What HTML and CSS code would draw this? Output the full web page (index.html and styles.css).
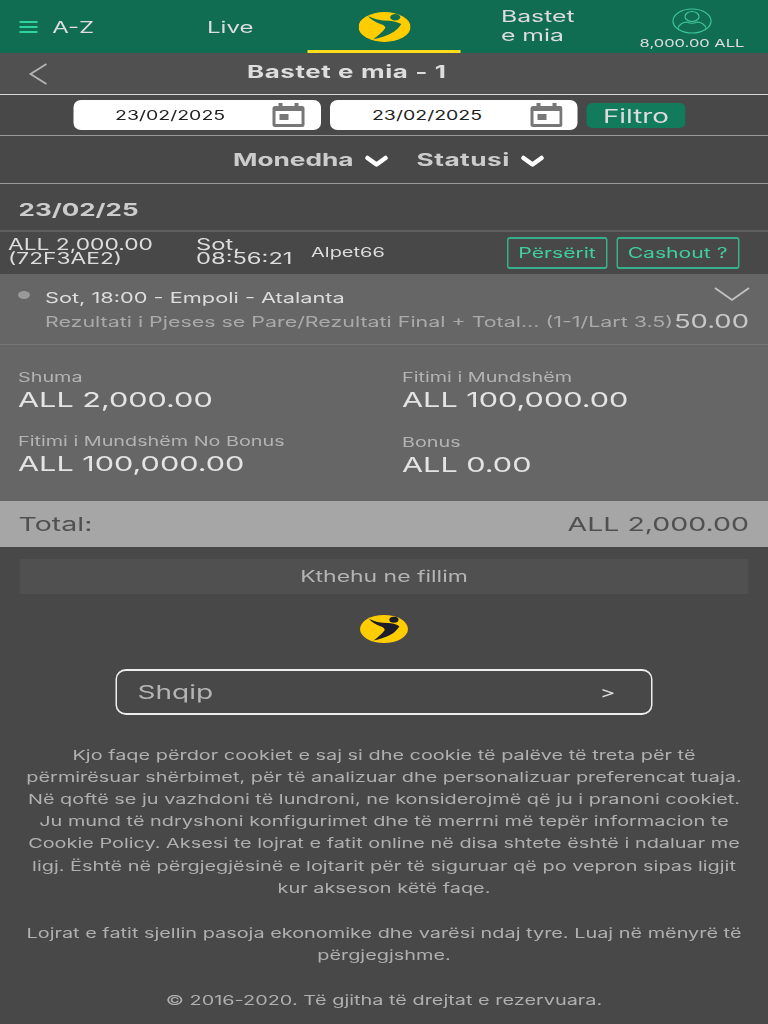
FILE: index.html
```html
<!DOCTYPE html>
<html lang="en">
<head>
    <meta charset="UTF-8">
    <meta name="viewport" content="width=device-width, initial-scale=1.0">
    <title>Bastet e mia</title>
    <link rel="stylesheet" href="styles.css">
</head>
<body>
<div class="page">
    <svg class="defs" width="0" height="0" aria-hidden="true">
        <symbol id="logo" viewBox="0 0 52 30" preserveAspectRatio="none">
            <ellipse cx="26" cy="15" rx="26" ry="15" fill="#fc0"></ellipse>
            <ellipse cx="36.700" cy="5.200" rx="5" ry="3.200" fill="currentColor"></ellipse>
            <path d="M9.700 4C15 7 22 8.700 30.300 8.700 34 8.700 39 10 42.700 12 41 15 38 18 35 20 28 24 21 26 14.700 27.300 19 24 24 20 26.500 16.500 27.500 14.500 25 13 22 12 17 10 12 7.500 9.700 4z" fill="currentColor"></path>
        </symbol>
        <symbol id="cal" viewBox="0 0 34 24" preserveAspectRatio="none">
            <path d="M1 5.500Q1 3 3.500 3H7V0h4v3h12V0h4v3h3.500Q33 3 33 5.500V21.500Q33 24 30.500 24H3.500Q1 24 1 21.500z" fill="#777"></path>
            <rect x="4" y="8" width="26" height="13" fill="#fff"></rect>
            <rect x="8" y="11" width="9" height="6" fill="#777"></rect>
        </symbol>
        <symbol id="chev" viewBox="0 0 24 13" preserveAspectRatio="none">
            <path d="M3 3l9 6.500L21 3" fill="none" stroke="#fff" stroke-width="4.500" stroke-linecap="round" stroke-linejoin="round"></path>
        </symbol>
    </svg>

    <header class="topbar">
        <div class="nav-az">
            <span class="burger"><i></i><i></i><i></i></span>
            <span>A-Z</span>
        </div>
        <div class="nav-live">Live</div>
        <div class="nav-home">
            <svg class="logo-top"><use href="#logo"></use></svg>
        </div>
        <div class="nav-bets">Bastet<br>e mia</div>
        <div class="nav-account">
            <svg class="user-icon" viewBox="0 0 40 26" preserveAspectRatio="none" fill="none" stroke="#3fc596" stroke-width="1.200">
                <ellipse cx="20" cy="13" rx="19" ry="12"></ellipse>
                <ellipse cx="20" cy="8.500" rx="7" ry="5"></ellipse>
                <path d="M6 21c0-4 5-7 9-7 3 1.500 7 1.500 10 0 4 0 9 3 9 7"></path>
            </svg>
            <span>8,000.00 ALL</span>
        </div>
    </header>

    <div class="titlebar">
        <svg class="back" viewBox="0 0 20 22" preserveAspectRatio="none" fill="none" stroke="#b5b5b5" stroke-width="1.800"><path d="M18 1L2 11l16 10"></path></svg>
        <h1>Bastet e mia - 1</h1>
    </div>

    <div class="dates">
        <div class="date-box"><span>23/02/2025</span><svg class="cal"><use href="#cal"></use></svg></div>
        <div class="date-box"><span>23/02/2025</span><svg class="cal"><use href="#cal"></use></svg></div>
        <button class="filter-btn">Filtro</button>
    </div>

    <div class="filters">
        <span>Monedha</span><svg class="chev"><use href="#chev"></use></svg>
        <span class="filter-second">Statusi</span><svg class="chev"><use href="#chev"></use></svg>
    </div>

    <div class="date-head">23/02/25</div>

    <div class="bet-row">
        <div class="bet-amount">ALL 2,000.00<br>(72F3AE2)</div>
        <div class="bet-time">Sot,<br>08:56:21</div>
        <div class="bet-user">Alpet66</div>
        <div class="bet-actions">
            <a class="outline-btn btn-repeat">Përsërit</a>
            <a class="outline-btn btn-cashout">Cashout ?</a>
        </div>
    </div>

    <section class="event">
        <div class="event-top">
            <span class="dot"></span>
            <span class="event-name">Sot, 18:00 - Empoli - Atalanta</span>
            <svg class="event-chev" viewBox="0 0 36 16" preserveAspectRatio="none" fill="none" stroke="#c4c4c4" stroke-width="1.800"><path d="M1 2l17 12L35 2"></path></svg>
        </div>
        <div class="event-bottom">
            <span class="event-market">Rezultati i Pjeses se Pare/Rezultati Final + Total... (1-1/Lart 3.5)</span>
            <span class="event-odds">50.00</span>
        </div>
    </section>

    <section class="details">
        <div class="detail"><label>Shuma</label><strong>ALL 2,000.00</strong></div>
        <div class="detail"><label>Fitimi i Mundshëm</label><strong>ALL 100,000.00</strong></div>
        <div class="detail"><label>Fitimi i Mundshëm No Bonus</label><strong>ALL 100,000.00</strong></div>
        <div class="detail detail-bonus"><label>Bonus</label><strong>ALL 0.00</strong></div>
    </section>

    <div class="total"><span>Total:</span><span>ALL 2,000.00</span></div>

    <a class="back-top">Kthehu ne fillim</a>

    <svg class="logo-foot"><use href="#logo"></use></svg>

    <div class="lang"><span>Shqip</span><span class="lang-arrow">&gt;</span></div>

    <footer class="foot">
        <p>Kjo faqe përdor cookiet e saj si dhe cookie të palëve të treta për të përmirësuar shërbimet, për të analizuar dhe personalizuar preferencat tuaja. Në qoftë se ju vazhdoni të lundroni, ne konsiderojmë që ju i pranoni cookiet. Ju mund të ndryshoni konfigurimet dhe të merrni më tepër informacion te Cookie Policy. Aksesi te lojrat e fatit online në disa shtete është i ndaluar me ligj. Është në përgjegjësinë e lojtarit për të siguruar që po vepron sipas ligjit kur akseson këtë faqe.</p>
        <p>Lojrat e fatit sjellin pasoja ekonomike dhe varësi ndaj tyre. Luaj në mënyrë të përgjegjshme.</p>
        <p>© 2016-2020. Të gjitha të drejtat e rezervuara.</p>
    </footer>
</div>
</body>
</html>
```

FILE: styles.css
```css
body {
    margin: 0;
    height: 1024px;
    overflow: hidden;
    background-color: #484848;
}
/* the whole app is stretched sideways, so widths below are in 512px units */
.page {
    width: 512px;
    transform: scaleX(1.5);
    transform-origin: 0 0;
    font-family: Inter, "Liberation Sans", sans-serif;
    color: #ccc;
}
.defs {
    display: block;
    height: 0;
}

/* top nav */
.topbar {
    display: flex;
    height: 53px;
    background-color: #116d52;
    color: #ddd;
    font-size: 16px;
}
.nav-az {
    width: 100px;
    padding-left: 13.300px;
    box-sizing: border-box;
    display: flex;
    align-items: center;
    gap: 9.500px;
}
.burger {
    display: flex;
    flex-direction: column;
    gap: 3px;
}
.burger i {
    display: block;
    width: 12px;
    height: 2px;
    background-color: #2fd39a;
}
.nav-live {
    width: 104.700px;
    padding-left: 38px;
    box-sizing: border-box;
    display: flex;
    align-items: center;
}
.nav-home {
    width: 102px;
    box-sizing: border-box;
    border-bottom: 3px solid #ffdc1e;
    display: flex;
    justify-content: center;
    padding: 12px 0 0 1px;
    color: #116d52;
}
.logo-top {
    width: 34.700px;
    height: 30px;
}
.nav-bets {
    width: 104px;
    padding-left: 27.300px;
    box-sizing: border-box;
    font-size: 16.500px;
    line-height: 19px;
    padding-top: 7px;
}
.nav-account {
    flex: 1;
    display: flex;
    flex-direction: column;
    align-items: center;
    font-size: 11px;
    padding-top: 8px;
}
.user-icon {
    width: 26.700px;
    height: 26px;
    margin-bottom: 2px;
}

/* title */
.titlebar {
    height: 42px;
    box-sizing: border-box;
    background-color: #505050;
    border-bottom: 1px solid #d8d8d8;
    display: flex;
    align-items: center;
    padding-left: 19.300px;
}
.back {
    width: 13.300px;
    height: 22px;
}
h1 {
    margin: 0 0 4px 132px;
    font-size: 17.300px;
    font-weight: 700;
    letter-spacing: .4px;
    color: #ddd;
}

/* dates */
.dates {
    height: 41px;
    box-sizing: border-box;
    border-bottom: 1px solid #999;
    display: flex;
    align-items: flex-start;
    gap: 6px;
    padding: 5px 0 0 48.700px;
}
.date-box {
    width: 165.300px;
    height: 30px;
    box-sizing: border-box;
    background-color: #fff;
    border-radius: 5px / 7px;
    color: #222;
    font-size: 13px;
    display: flex;
    align-items: center;
    padding: 0 10px 0 28px;
    justify-content: space-between;
}
.cal {
    width: 22.700px;
    height: 24px;
}
.filter-btn {
    width: 65.300px;
    height: 25px;
    margin-top: 3px;
    background-color: #117b5c;
    color: #ddd;
    border: none;
    border-radius: 4px / 5px;
    font-family: inherit;
    font-size: 18.500px;
    padding: 0;
}

/* filter row */
.filters {
    height: 48px;
    box-sizing: border-box;
    border-bottom: 1px solid #999;
    display: flex;
    align-items: center;
    padding-left: 155.300px;
    font-size: 17.500px;
    font-weight: 700;
}
.chev {
    width: 16px;
    height: 13px;
    margin: 3px 0 0 7.300px;
}
.filter-second {
    margin-left: 18.700px;
    letter-spacing: .3px;
}
.date-head {
    height: 48px;
    box-sizing: border-box;
    border-bottom: 2px solid #5e5e5e;
    padding: 15px 0 0 12.400px;
    font-size: 17.300px;
    font-weight: 700;
}

/* bet */
.bet-row {
    height: 42px;
    display: flex;
    align-items: center;
    font-size: 15.200px;
    line-height: 14px;
    color: #ddd;
}
.bet-amount {
    width: 130.700px;
    padding-left: 5.300px;
    box-sizing: border-box;
    margin-bottom: 2px;
}
.bet-time {
    width: 76.700px;
    font-size: 15.800px;
    margin-bottom: 2px;
}
.bet-user {
    font-size: 13.300px;
    margin-bottom: 2px;
}
.bet-actions {
    margin-left: auto;
    margin-right: 19.300px;
    display: flex;
    gap: 6px;
}
.outline-btn {
    height: 32px;
    box-sizing: border-box;
    border: 2px solid #35b08a;
    border-width: 2px 1.300px;
    border-radius: 2px / 3px;
    color: #3fd0a0;
    font-size: 14.100px;
    display: flex;
    align-items: center;
    justify-content: center;
}
.btn-repeat {
    width: 66.700px;
}
.btn-cashout {
    width: 82px;
}
.event {
    height: 71px;
    box-sizing: border-box;
    background-color: #666;
    border-bottom: 1px solid #757575;
    padding: 13px 12.700px 0 12px;
}
.event-top {
    display: flex;
    align-items: center;
    height: 20px;
}
.dot {
    width: 8px;
    height: 8px;
    border-radius: 50%;
    background-color: #999;
    margin: -4px 10px 0 0;
}
.event-name {
    font-size: 14.500px;
    color: #ddd;
}
.event-chev {
    margin: -6px -.5px 0 auto;
    width: 24px;
    height: 16px;
}
.event-bottom {
    display: flex;
    align-items: center;
    margin-top: 3px;
    padding-left: 18px;
}
.event-market {
    font-size: 14.280px;
    color: #aaa;
    white-space: nowrap;
}
.event-odds {
    margin-left: auto;
    font-size: 18.300px;
    color: #c8c8c8;
}
.details {
    height: 156px;
    box-sizing: border-box;
    background-color: #666;
    display: grid;
    grid-template-columns: 256px 1fr;
    grid-auto-rows: 64px;
    padding: 24px 0 0 12px;
}
.detail label {
    display: block;
    font-size: 13.200px;
    color: #b4b4b4;
    line-height: 16px;
}
.detail strong {
    display: block;
    font-weight: 400;
    font-size: 20.400px;
    color: #e4e4e4;
    line-height: 28px;
    margin-top: 1px;
}
.detail-bonus label {
    margin-top: 1px;
}
.total {
    height: 46px;
    box-sizing: border-box;
    background-color: #a6a6a6;
    color: #505050;
    display: flex;
    align-items: center;
    justify-content: space-between;
    padding: 0 12.700px 0 12.400px;
    font-size: 19px;
}
.back-top {
    display: flex;
    align-items: center;
    justify-content: center;
    height: 35px;
    margin: 12px 13.300px 0;
    background-color: #505050;
    border-radius: 2px;
    color: #b4b4b4;
    font-size: 15.300px;
}
.logo-foot {
    display: block;
    width: 32px;
    height: 28px;
    margin: 21px auto 0;
    color: #1c1c2a;
}
.lang {
    width: 357.300px;
    height: 46px;
    box-sizing: border-box;
    margin: 26px auto 0;
    border: 2px solid #eee;
    border-width: 2px 1.300px;
    border-radius: 7px / 10px;
    display: flex;
    align-items: center;
    justify-content: space-between;
    padding: 0 23.300px 0 13.300px;
    font-size: 18.700px;
    color: #b4b4b4;
}
.lang-arrow {
    color: #ddd;
    font-size: 16px;
}
.foot {
    padding: 28.500px 14px 0;
    text-align: center;
    font-size: 13.250px;
    line-height: 22.200px;
    color: #b0b0b0;
}
.foot p {
    margin: 0 0 23px;
}
```
